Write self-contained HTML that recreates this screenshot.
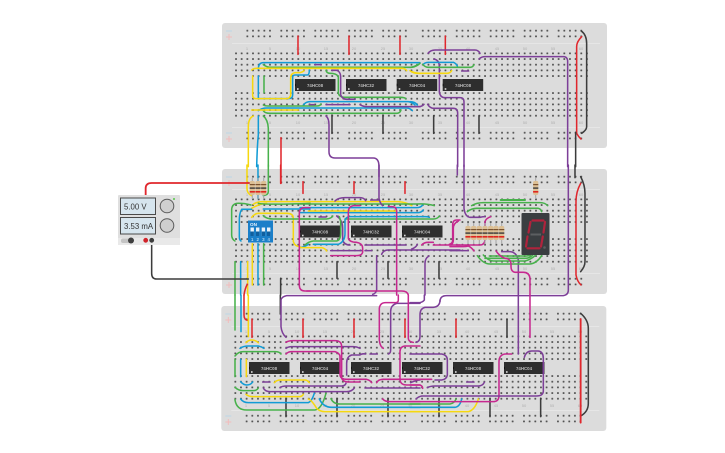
<!DOCTYPE html>
<html><head><meta charset="utf-8"><style>
html,body{margin:0;padding:0;background:#fff;width:725px;height:453px;overflow:hidden}
svg{display:block}
.w path,.w{fill:none;stroke-linecap:round;stroke-linejoin:round}
.y{stroke:#f6d80f}.b{stroke:#129bd5}.g{stroke:#47b14b}.p{stroke:#7d3f98}.k{stroke:#c6288f}.r{stroke:#e0272d}.d{stroke:#3c3c3c}
.c{font:bold 4.4px "Liberation Sans",sans-serif;fill:#bdbdbd;text-anchor:middle}
.n{font:4px "Liberation Sans",sans-serif;fill:#b0b0b0;text-anchor:middle}
</style></head><body>
<svg width="725" height="453" viewBox="0 0 725 453" xmlns="http://www.w3.org/2000/svg">
<defs>
<pattern id="t" patternUnits="userSpaceOnUse" x="233.17" y="50.47" width="5.66" height="5.67"><rect x="1.95" y="1.95" width="1.8" height="1.8" rx=".5" fill="#4f4f4f"/></pattern>
<g id="bd">
<rect x="222" y="23" width="385" height="125" rx="3" fill="#dcdcdc"/>
<path d="M232 43.5H600M232 127.5H600" stroke="#e6e6e6" stroke-width="1"/>
<path d="M226 31H232M226 133H232" stroke="#bcd6e6" stroke-width="1"/>
<path d="M226 37H232M229 34V40M226 139H232M229 136V142" stroke="#f2bcbc" stroke-width="1"/>
<rect x="233.17" y="50.47" width="356.6" height="28.35" fill="url(#t)"/>
<rect x="233.17" y="90.16" width="356.6" height="28.35" fill="url(#t)"/>
<g fill="url(#t)">
<path id="rl" d="M244.5 28.1h28.3v11.3h-28.3zM278.4 28.1h28.3v11.3h-28.3zM312.4 28.1h28.3v11.3h-28.3zM346.4 28.1h28.3v11.3h-28.3zM380.3 28.1h28.3v11.3h-28.3zM420 28.1h28.3v11.3h-28.3zM453.9 28.1h28.3v11.3h-28.3zM487.9 28.1h28.3v11.3h-28.3zM521.8 28.1h28.3v11.3h-28.3zM555.8 28.1h28.3v11.3h-28.3z"/>
<path d="M244.5 130.1h28.3v11.3h-28.3zM278.4 130.1h28.3v11.3h-28.3zM312.4 130.1h28.3v11.3h-28.3zM346.4 130.1h28.3v11.3h-28.3zM380.3 130.1h28.3v11.3h-28.3zM420 130.1h28.3v11.3h-28.3zM453.9 130.1h28.3v11.3h-28.3zM487.9 130.1h28.3v11.3h-28.3zM521.8 130.1h28.3v11.3h-28.3zM555.8 130.1h28.3v11.3h-28.3z"/>
</g>
</g>
<g id="chip"><rect width="40.5" height="12" fill="#2e2e2e"/><path d="M0 4.5a1.6 1.6 0 0 1 0 3z" fill="#111"/><rect x="2" y="9.2" width="1.6" height="1.6" fill="#ddd"/></g>
<g id="res"><path d="M0 -3V18" stroke="#a5a5a5" stroke-width="1"/><rect x="-2.6" y="0" width="5.2" height="14" rx="1.6" fill="#dcbf94"/><rect x="-2.6" y="3" width="5.2" height="1.2" fill="#7a5330"/><rect x="-2.6" y="6.4" width="5.2" height="1.4" fill="#3a3a3a"/><rect x="-2.6" y="10" width="5.2" height="1.6" fill="#e0251f"/></g>
</defs>
<rect width="725" height="453" fill="#fff"/>
<use href="#bd"/>
<use href="#bd" transform="translate(0 146)"/>
<use href="#bd" transform="translate(-.7 283)"/>

<!-- column numbers -->
<g class="n">
<text x="247" y="50">1</text><text x="270" y="50">5</text><text x="298" y="50">10</text><text x="326" y="50">15</text><text x="354" y="50">20</text><text x="383" y="50">25</text><text x="411" y="50">30</text><text x="440" y="50">35</text><text x="468" y="50">40</text><text x="497" y="50">45</text><text x="525" y="50">50</text><text x="553" y="50">55</text><text x="581" y="50">60</text>
<text x="247" y="124">1</text><text x="270" y="124">5</text><text x="298" y="124">10</text><text x="326" y="124">15</text><text x="354" y="124">20</text><text x="383" y="124">25</text><text x="411" y="124">30</text><text x="440" y="124">35</text><text x="468" y="124">40</text><text x="497" y="124">45</text><text x="525" y="124">50</text><text x="553" y="124">55</text><text x="581" y="124">60</text>
<text x="247" y="196">1</text><text x="270" y="196">5</text><text x="298" y="196">10</text><text x="326" y="196">15</text><text x="354" y="196">20</text><text x="383" y="196">25</text><text x="411" y="196">30</text><text x="440" y="196">35</text><text x="468" y="196">40</text><text x="497" y="196">45</text><text x="525" y="196">50</text><text x="553" y="196">55</text><text x="581" y="196">60</text>
<text x="247" y="270">1</text><text x="270" y="270">5</text><text x="298" y="270">10</text><text x="326" y="270">15</text><text x="354" y="270">20</text><text x="383" y="270">25</text><text x="411" y="270">30</text><text x="440" y="270">35</text><text x="468" y="270">40</text><text x="497" y="270">45</text><text x="525" y="270">50</text><text x="553" y="270">55</text><text x="581" y="270">60</text>
<text x="246" y="333">1</text><text x="269" y="333">5</text><text x="297" y="333">10</text><text x="325" y="333">15</text><text x="353" y="333">20</text><text x="382" y="333">25</text><text x="410" y="333">30</text><text x="439" y="333">35</text><text x="467" y="333">40</text><text x="496" y="333">45</text><text x="524" y="333">50</text><text x="552" y="333">55</text><text x="580" y="333">60</text>
<text x="246" y="407">1</text><text x="269" y="407">5</text><text x="297" y="407">10</text><text x="325" y="407">15</text><text x="353" y="407">20</text><text x="382" y="407">25</text><text x="410" y="407">30</text><text x="439" y="407">35</text><text x="467" y="407">40</text><text x="496" y="407">45</text><text x="524" y="407">50</text><text x="552" y="407">55</text><text x="580" y="407">60</text>
</g>

<!-- chips -->
<use href="#chip" x="295" y="79"/><use href="#chip" x="346" y="79"/><use href="#chip" x="396.7" y="79"/><use href="#chip" x="442.7" y="79"/>
<use href="#chip" x="300" y="225.5"/><use href="#chip" x="351" y="225.5"/><use href="#chip" x="402" y="225.5"/>
<use href="#chip" x="249" y="362"/><use href="#chip" x="300" y="362"/><use href="#chip" x="351" y="362"/><use href="#chip" x="402" y="362"/><use href="#chip" x="453" y="362"/><use href="#chip" x="504" y="362"/>
<g class="c">
<text x="315" y="87">74HC08</text><text x="366" y="87">74HC32</text><text x="417" y="87">74HC04</text><text x="463" y="87">74HC08</text>
<text x="320" y="233.5">74HC08</text><text x="371" y="233.5">74HC32</text><text x="422" y="233.5">74HC04</text>
<text x="269" y="370">74HC08</text><text x="320" y="370">74HC04</text><text x="371" y="370">74HC32</text><text x="422" y="370">74HC32</text><text x="473" y="370">74HC08</text><text x="524" y="370">74HC04</text>
</g>

<!-- zoom1 wires -->
<g class="w" transform="translate(220 20) scale(.3333)" stroke-width="4.6">
<path class="r" d="M234 48V103M387 48V103M540 48V103M183 353V490"/>
<path class="d" d="M336 285V340M489 285V340"/>
<path class="b" d="M115 148Q115 128 130 128H600M115 168V236H205Q218 236 218 225V172Q218 165 225 165H262Q268 165 268 150M250 255Q258 245 270 245H565Q578 248 585 255M115 272Q125 264 140 264H560Q570 264 577 272M115 288V345Q112 370 110 440"/>
<path class="g" d="M130 134Q140 142 155 142H575Q590 140 600 130M132 168V218M318 151Q320 160 330 160Q350 160 355 170V220Q358 232 375 232H540Q555 232 557 236M130 255Q135 258 145 258H290Q300 258 303 252M130 272Q135 280 150 280H530Q540 280 543 270M130 288Q145 300 145 330V440"/>
<path class="y" d="M95 150Q100 145 110 145H545Q555 145 560 152M575 155Q590 160 600 160M98 168V225Q98 236 108 236H200Q210 236 212 225V175Q212 160 225 158H240Q250 155 252 152M95 270H235M100 288Q85 295 85 320V440"/>
<path class="p" d="M284 134H303M335 151H350Q362 155 362 170V225Q368 238 380 238H405M268 254H283M318 254H390M420 254Q430 260 440 260H600M318 288Q327 295 327 315V395Q327 414 345 414H460Q477 414 477 440V470"/>
</g>
<!-- zoom2 wires -->
<g class="w" transform="translate(410 20) scale(.3333)" stroke-width="4.6">
<path class="r" d="M106 48V103M515 50Q500 65 500 80V340Q505 350 513 357"/>
<path class="p" d="M54 100Q62 90 75 90H195Q205 90 210 100M72 117Q88 120 88 140V215Q90 233 105 233H150Q162 233 162 245V440M207 117Q215 110 225 110H460Q473 110 473 125V440M155 153H176M0 260H30Q38 258 42 253M53 253Q60 265 72 265H130Q143 265 143 280V440"/>
<path class="b" d="M130 127Q138 130 142 138M40 133Q45 127 55 127H130M0 245Q15 245 22 255"/>
<path class="g" d="M38 133Q45 142 55 142H180Q188 142 192 134M0 142Q15 140 22 134"/>
<path class="y" d="M0 152Q10 160 20 160H110Q120 160 125 152"/>
<path class="d" d="M71 287V340M207 287V340M514 33Q530 45 530 70V320Q530 330 515 340M497 337V440"/>
</g>

<!-- zoom4 wires -->
<g class="w" transform="translate(300 165) scale(.3333)" stroke-width="4.6">
<path class="r" d="M9 50V85M162 50V85M315 50V85"/>
<path class="d" d="M111 290V340M264 290V340M417 290V340"/>
<path class="p" d="M472 0V30"/>
<path class="b" d="M0 128H350Q362 128 368 120M0 143H355Q365 142 370 135M150 155H375Q382 155 388 157"/>
<path class="y" d="M0 110H295Q320 112 335 122M25 138H290"/>
<path class="g" d="M0 117H350Q380 115 403 122M0 162H80Q95 160 98 153M135 162H400Q412 162 418 153"/>
<path class="p" d="M237 0V100Q240 115 248 122M57 156H78M105 108Q115 98 135 98H180Q192 98 197 107M212 105H235M230 272V375Q228 385 218 388M110 153Q128 165 128 190V225Q132 240 150 240M195 240H318M335 252Q348 248 352 238M245 268Q250 255 265 255H480M92 257H185M195 257H215M375 390V295Q375 280 387 273"/>
<path class="b" d="M0 248Q15 245 25 238M40 238H115Q135 230 135 205V165Q135 160 145 155"/>
<path class="g" d="M15 240Q25 230 40 228H110Q122 225 122 205V170Q120 160 118 155"/>
<path class="y" d="M0 248H65Q75 250 80 258"/>
<path class="k" d="M180 122H160Q145 125 145 140V220Q148 232 170 232Q188 235 188 250V262Q185 272 170 272H92M290 390V140Q290 125 275 125H265M20 378H305Q322 378 325 390M365 240Q372 232 385 232H400M400 240H480M480 165H470Q458 165 458 180V225Q458 235 448 238"/>
</g>

<!-- zoom3 wires -->
<g class="w" transform="translate(110 165) scale(.3333)" stroke-width="4.6">
<path class="y" d="M411 0V70Q411 85 425 92M427 236V360M425 157Q435 145 445 145H530Q550 145 550 160V230Q555 245 570 245M430 118Q440 110 460 110H600M425 130Q450 115 470 115M413 290V390"/>
<path class="b" d="M444 0V100M444 236V360M425 133H395Q388 145 388 165V215Q388 225 393 228M460 132H600M392 290V390"/>
<path class="g" d="M475 0V80Q475 90 460 92M461 236V360M423 120Q400 114 380 115Q365 118 365 135V210Q365 222 375 228M445 115Q460 120 600 115M460 152Q470 162 490 162H600M375 290V390"/>
<path class="k" d="M600 128H585Q568 128 568 145V360Q568 378 585 378H600"/>
<path class="r" d="M512 0V55M402 390Q405 370 412 358"/>
<path class="d" d="M512 340V390M125 226V325Q125 342 140 342H415"/>
<path class="r" stroke-width="5.5" d="M107 226V70Q107 54 125 54H420"/>
</g>

<!-- zoom5 wires -->
<g class="w" transform="translate(450 165) scale(.3333)" stroke-width="4.6">
<path class="d" d="M375 0V38M392 35Q405 60 405 85V290Q405 305 392 320"/>
<path class="r" d="M392 55Q378 80 378 110V330Q382 350 393 360"/>
<path class="p" d="M42 0V130Q45 155 60 157H90Q100 155 105 155M355 0V375Q355 392 335 392H-10Q-30 392 -30 410M205 390V285Q200 262 180 260H155M0 257H55"/>
<path class="g" d="M65 122Q80 113 100 113H270Q285 113 293 122M52 140Q65 130 80 130H265Q272 131 275 140M118 273H230Q240 272 245 265M105 280H225Q240 280 250 268M82 272Q100 297 120 297H240Q260 295 275 272M100 270Q115 288 130 288H225Q240 285 258 270"/>
<path class="g" stroke-width="6" d="M152 105H225"/>
<path class="k" d="M240 390V340Q238 322 220 322H195Q183 320 183 305V295Q180 280 165 280Q150 275 138 258M25 168Q10 175 10 190V225Q10 238 0 240M20 240H90Q103 240 105 225V170Q108 160 122 155M0 245H40Q48 245 55 243Q65 248 72 258"/>
</g>

<!-- zoom6 wires -->
<g class="w" transform="translate(220 300) scale(.3333)" stroke-width="4.6">
<path class="d" d="M198 295V350M351 295V350M504 295V350M181 -15V42"/>
<path class="r" d="M96 57V112M249 57V112M402 57V112M555 57V112M72 -15V45Q72 60 85 62"/>
<path class="g" d="M45 -15V90M45 178V230M45 168Q55 155 70 155H165Q178 155 183 162M45 262Q55 272 70 272H100Q110 272 115 264M45 298V300Q50 330 80 330H285Q305 328 318 280M333 296Q340 312 360 312H600"/>
<path class="b" d="M63 -15V95M62 178V230M60 145Q70 138 85 138H115Q125 140 132 145M62 245Q70 255 80 255Q92 255 98 246M62 297Q70 308 85 308H265Q275 305 283 280M298 297Q310 322 335 322H600"/>
<path class="y" d="M85 -15V110M79 178V230M78 128Q85 120 95 120Q107 120 115 128M163 248Q170 240 180 240H255Q262 240 268 248M78 283Q85 290 100 290H240Q248 288 250 283M265 297Q275 300 290 325Q300 335 315 335H600"/>
<path class="p" d="M183 0V80Q185 100 198 112M198 145Q205 140 215 140H400Q410 140 420 145M437 162Q425 160 420 165H395Q380 170 380 190V225M450 162H472M600 10H530Q512 15 512 35V150Q512 160 505 162M600 240Q590 240 572 248M435 264H600M130 264Q135 275 150 275H380Q395 275 403 264M180 263Q185 258 200 258H365Q375 258 378 250M128 246H150M183 0Q185 -10 200 -13H470"/>
<path class="k" d="M198 127Q205 122 220 122H345Q365 122 365 140V235Q370 246 385 246H420M198 162Q205 155 215 155H345Q360 160 360 170V225Q362 238 380 238H440Q450 240 455 248M490 145Q480 140 478 120V25Q480 8 497 8H527Q535 8 535 0V-15M565 -15V115Q565 125 580 127M600 138H555Q540 140 540 155V240Q542 255 560 255H600M470 248Q475 238 490 238H600M488 297Q495 305 510 305H600"/>
</g>

<!-- zoom7 wires -->
<g class="w" transform="translate(410 300) scale(.3333)" stroke-width="4.6">
<path class="r" d="M138 57V112"/>
<path class="d" d="M291 57V112M87 295V350M240 295V350M392 295V350M512 40Q535 60 535 85V310Q535 335 512 348"/>
<path class="r" stroke-width="5.5" d="M512 57V368"/>
<path class="g" d="M0 312H120Q133 310 138 297"/>
<path class="b" d="M0 322H135Q150 320 155 297"/>
<path class="y" d="M0 335H175Q195 330 205 297"/>
<path class="k" d="M360 -15V112M305 162H285Q267 165 267 185V290Q265 305 250 305H0M0 238H65M0 255H30Q38 258 38 265"/>
<path class="p" d="M325 -15V162M343 172Q348 153 365 153H385Q400 155 400 175V275Q398 288 380 288H35Q25 290 18 297M0 162H95Q112 165 112 180V225Q110 238 95 240H75M52 263Q60 258 75 258H205Q218 258 223 247M170 246H192M90 0Q90 20 70 22H45Q30 25 30 45V110Q30 125 18 127M0 8H30Q40 5 43 0V-15"/>
</g>

<!-- resistors -->
<use href="#res" x="252.3" y="181"/><use href="#res" x="258" y="181"/><use href="#res" x="263.7" y="181"/>
<use href="#res" x="535.7" y="181"/>
<use href="#res" x="468" y="226"/><use href="#res" x="473.7" y="226"/><use href="#res" x="479.3" y="226"/><use href="#res" x="485" y="226"/><use href="#res" x="490.7" y="226"/><use href="#res" x="496" y="226"/><use href="#res" x="501.7" y="226"/>

<!-- DIP switch -->
<rect x="248" y="220.5" width="25" height="22" fill="#1b7fc9"/>
<text x="250" y="226" font-family="Liberation Sans,sans-serif" font-size="4.6" font-weight="bold" fill="#e8f3fb">ON</text>
<g fill="#eaf3fa"><rect x="250.5" y="227.5" width="3.4" height="8.5"/><rect x="256" y="227.5" width="3.4" height="8.5"/><rect x="261.7" y="227.5" width="3.4" height="8.5"/><rect x="267" y="227.5" width="3.4" height="8.5"/></g>
<g fill="#0f5f9f"><rect x="250.5" y="231.5" width="3.4" height="4.5"/><rect x="256" y="231.5" width="3.4" height="4.5"/><rect x="261.7" y="231.5" width="3.4" height="4.5"/><rect x="267" y="231.5" width="3.4" height="4.5"/></g>
<g font-family="Liberation Sans,sans-serif" font-size="4.4" fill="#e8f3fb" text-anchor="middle"><text x="252.2" y="241">1</text><text x="257.7" y="241">2</text><text x="263.4" y="241">3</text><text x="268.7" y="241">4</text></g>

<!-- 7-seg -->
<rect x="521.5" y="213" width="28" height="42" rx="1" fill="#3a3e41"/>
<g stroke="#b0233c" stroke-width="2.2" stroke-linecap="round" fill="none">
<path d="M532.5 220.5H543.5"/><path d="M545 222L543.5 232.5"/><path d="M542.8 236.5L541 246.5"/><path d="M527.5 248.3H539.5"/><path d="M526 246.5L527.5 236.5"/><path d="M528.5 232.5L530.5 222"/>
</g>
<path d="M530.5 234.5H541" stroke="#5c5f61" stroke-width="2"/>
<circle cx="544.5" cy="247.5" r="1.3" fill="#5c5f61"/>

<!-- power supply -->
<rect x="118" y="195" width="62" height="50" rx="1" fill="#dfdfdf"/>
<rect x="118" y="238" width="62" height="7" fill="#e9e9e9"/>
<rect x="120.5" y="198" width="35" height="16.5" fill="#d6e5ee" stroke="#4a4a4a" stroke-width="1"/>
<rect x="120.5" y="217.5" width="35" height="16.5" fill="#d6e5ee" stroke="#4a4a4a" stroke-width="1"/>
<text x="124" y="209.5" font-family="Liberation Sans,sans-serif" font-size="7.8" fill="#333">5.00 V</text>
<text x="124" y="229" font-family="Liberation Sans,sans-serif" font-size="7.8" fill="#333">3.53 mA</text>
<circle cx="167" cy="206" r="6.8" fill="#cfcfcf" stroke="#5a5a5a" stroke-width="1"/>
<circle cx="167" cy="225.5" r="6.8" fill="#cfcfcf" stroke="#5a5a5a" stroke-width="1"/>
<circle cx="174" cy="199" r="1" fill="#57c84a"/>
<rect x="121" y="238.5" width="10" height="4.5" rx="2" fill="#c4c4c4"/><circle cx="131" cy="240.5" r="3" fill="#3f3f3f"/>
<circle cx="145.7" cy="240.3" r="2.4" fill="#d0232a"/><circle cx="151.7" cy="240.3" r="2.4" fill="#3c3c3c"/>
</svg>
</body></html>
